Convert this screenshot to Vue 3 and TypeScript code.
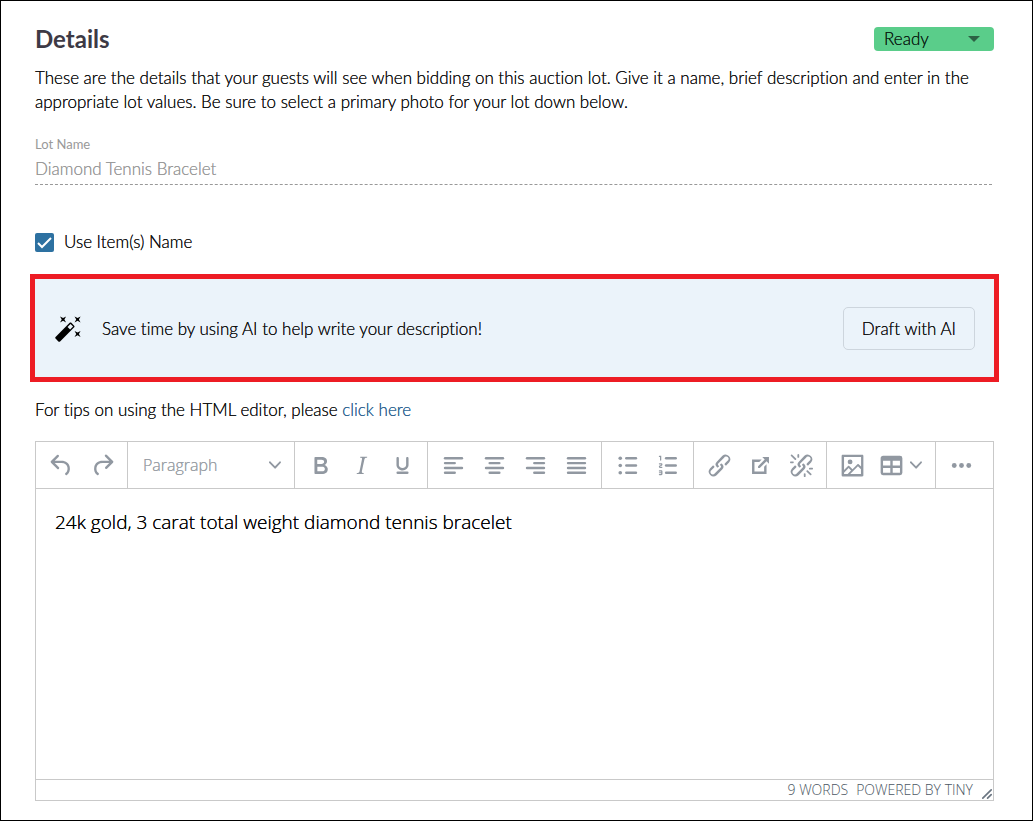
<script setup lang="ts">
import { ref } from 'vue'

interface Tool {
  name: string
  paths: string[]
  menu?: boolean
}

const bar = (x: number, y: number, w: number): string =>
  `M${x + 1} ${y}h${w - 2}a1 1 0 0 1 0 2h${2 - w}a1 1 0 0 1 0-2Z`
const dot = (x: number, y: number, r: number): string =>
  `M${x - r} ${y}a${r} ${r} 0 1 0 ${2 * r} 0a${r} ${r} 0 1 0 ${-2 * r} 0Z`

const chain =
  'M6.2 12.3a1 1 0 0 1 1.4 1.4l-2.1 2a2 2 0 1 0 2.7 2.8l4.8-4.8a1 1 0 0 0 0-1.4 1 1 0 1 1 1.4-1.3 2.9 2.9 0 0 1 0 4L9.6 20a3.9 3.9 0 0 1-5.5-5.5l2-2Zm11.6-.6a1 1 0 0 1-1.4-1.4l2-2a2 2 0 1 0-2.6-2.8L11 10.3a1 1 0 0 0 0 1.4A1 1 0 1 1 9.6 13a2.9 2.9 0 0 1 0-4L14.4 4a3.9 3.9 0 0 1 5.5 5.5l-2 2Z'
const chevron =
  'M8.7 2.2c.3-.3.8-.3 1 0 .4.4.4.9 0 1.2L5.7 7.8c-.3.3-.9.3-1.2 0L.2 3.4a.8.8 0 0 1 0-1.2c.3-.3.8-.3 1.1 0L5 6l3.7-3.8Z'

const history: Tool[] = [
  { name: 'Undo', paths: ['M6.4 8H12c3.7 0 6.2 2 6.8 5.1.6 2.7-.4 5.6-2.3 6.8a1 1 0 0 1-1-1.8c1.1-.6 1.8-2.7 1.4-4.6-.5-2.1-2.1-3.5-4.9-3.5H6.4l3.3 3.3a1 1 0 1 1-1.4 1.4l-5-5a1 1 0 0 1 0-1.4l5-5a1 1 0 0 1 1.4 1.4L6.4 8Z'] },
  { name: 'Redo', paths: ['M17.6 10H12c-2.8 0-4.4 1.4-4.9 3.5-.4 2 .3 4 1.4 4.6a1 1 0 1 1-1 1.8c-2-1.2-2.9-4.1-2.3-6.8.6-3 3-5.1 6.8-5.1h5.6l-3.3-3.3a1 1 0 1 1 1.4-1.4l5 5a1 1 0 0 1 0 1.4l-5 5a1 1 0 0 1-1.4-1.4l3.3-3.3Z'] },
]

const groups: Tool[][] = [
  [
    { name: 'Bold', paths: ['M7.8 19c-.3 0-.5 0-.6-.2l-.2-.5V5.7c0-.2 0-.4.2-.5l.6-.2h5c1.5 0 2.7.3 3.5 1 .7.6 1.1 1.4 1.1 2.5a3 3 0 0 1-.6 1.9c-.4.6-1 1-1.6 1.2.4.1.9.3 1.3.6s.8.7 1 1.2c.4.4.5 1 .5 1.6 0 1.3-.4 2.3-1.3 3-.8.7-2.1 1-3.8 1H7.8Zm5-8.3c.6 0 1.2-.1 1.6-.5.4-.3.6-.7.6-1.3 0-1.1-.8-1.7-2.3-1.7H9.3v3.5h3.4Zm.5 6c.7 0 1.3-.1 1.7-.4.4-.4.6-.9.6-1.5s-.2-1-.7-1.4c-.4-.3-1-.4-2-.4H9.4v3.8h4Z'] },
    { name: 'Italic', paths: ['m16.7 4.7-.1.9h-.3c-.6 0-1 0-1.4.3-.3.3-.4.6-.5 1.1l-2.1 9.8v.6c0 .5.4.8 1.4.8h.2l-.2.8H8l.2-.8h.2c1.1 0 1.8-.5 2-1.5l2-9.8.1-.5c0-.6-.4-.8-1.4-.8h-.3l.2-.9h5.8Z'] },
    { name: 'Underline', paths: ['M16 5c.6 0 1 .4 1 1v5.5a4 4 0 0 1-.4 1.8l-1 1.4a5.3 5.3 0 0 1-5.5 1 5 5 0 0 1-1.6-1c-.5-.4-.8-.9-1.1-1.4a4 4 0 0 1-.4-1.8V6c0-.6.4-1 1-1s1 .4 1 1v5.5c0 .3 0 .6.2 1l.6.7a3.3 3.3 0 0 0 2.2.8 3.4 3.4 0 0 0 2.2-.8c.3-.2.4-.5.6-.8l.2-.9V6c0-.6.4-1 1-1Z', bar(7, 17, 10)] },
  ],
  [
    { name: 'Align left', paths: [bar(4, 5, 16), bar(4, 9, 10), bar(4, 13, 16), bar(4, 17, 10)] },
    { name: 'Align center', paths: [bar(4, 5, 16), bar(7, 9, 10), bar(4, 13, 16), bar(7, 17, 10)] },
    { name: 'Align right', paths: [bar(4, 5, 16), bar(10, 9, 10), bar(4, 13, 16), bar(10, 17, 10)] },
    { name: 'Justify', paths: [bar(4, 5, 16), bar(4, 9, 16), bar(4, 13, 16), bar(4, 17, 16)] },
  ],
  [
    { name: 'Bullet list', paths: [bar(10, 5, 10), bar(10, 11, 10), bar(10, 17, 10), dot(6, 6, 1.5), dot(6, 12, 1.5), dot(6, 18, 1.5)] },
    { name: 'Numbered list', paths: [bar(9, 5, 10), bar(9, 11, 10), bar(9, 17, 10), 'M6 4v3.5c0 .3-.2.5-.5.5a.5.5 0 0 1-.5-.5V5h-.5a.5.5 0 0 1 0-1H6Zm-1 8.8.2.2h1.3c.3 0 .5.2.5.5s-.2.5-.5.5H4.9a1 1 0 0 1-.9-1V13c0-.4.3-.8.6-1l1.2-.4.2-.3a.2.2 0 0 0-.2-.2H4.5a.5.5 0 0 1-.5-.5c0-.3.2-.5.5-.5h1.6c.5 0 .9.4.9 1v.1c0 .4-.3.8-.6 1l-1.2.4-.2.3ZM7 17v2c0 .6-.4 1-1 1H4.5a.5.5 0 0 1 0-1h1.2c.2 0 .3-.1.3-.3 0-.2-.1-.3-.3-.3H4.4a.4.4 0 1 1 0-.8h1.3c.2 0 .3-.1.3-.3 0-.2-.1-.3-.3-.3H4.5a.5.5 0 1 1 0-1H6c.6 0 1 .4 1 1Z'] },
  ],
  [
    { name: 'Insert link', paths: [chain] },
    { name: 'Open link', paths: ['m15 13 2-2v8H5V7h8l-2 2H7v8h8v-4Zm4-8v5.5l-2-2-5.6 5.5H10v-1.4L15.5 7l-2-2H19Z'] },
    { name: 'Remove link', paths: [chain, 'M7.6 6.3a.8.8 0 0 1-1 1.1L3.3 4.2a.7.7 0 1 1 1-1l3.2 3.1ZM5.1 8.6a.8.8 0 0 1 0 1.5H3a.8.8 0 0 1 0-1.5H5Zm5-3.5a.8.8 0 0 1-1.5 0V3a.8.8 0 0 1 1.5 0V5Zm6 11.8a.8.8 0 0 1 1-1l3.2 3.2a.8.8 0 0 1-1 1L16 17Zm-2.2 2a.8.8 0 0 1 1.5 0V21a.8.8 0 0 1-1.5 0V19Zm5-3.5a.7.7 0 1 1 0-1.5H21a.8.8 0 0 1 0 1.5H19Z'] },
  ],
  [
    { name: 'Insert image', paths: ['m5 15.7 3.3-3.2c.3-.3.7-.3 1 0L12 15l4.1-4c.3-.4.8-.4 1 0l2 1.9V5H5v10.7ZM5 18V19h3l2.8-2.9-2-2L5 17.9Zm14-3-2.5-2.4-6.4 6.5H19v-4ZM4 3h16c.6 0 1 .4 1 1v16c0 .6-.4 1-1 1H4a1 1 0 0 1-1-1V4c0-.6.4-1 1-1Z', dot(10, 9, 2)] },
    { name: 'Table', menu: true, paths: ['M19 4a2 2 0 0 1 2 2v12a2 2 0 0 1-2 2H5a2 2 0 0 1-2-2V6c0-1.1.9-2 2-2h14ZM5 14v4h6v-4H5Zm14 0h-6v4h6v-4Zm0-6h-6v4h6V8ZM5 12h6V8H5v4Z'] },
  ],
  [{ name: 'More', paths: [dot(6, 12, 2), dot(12, 12, 2), dot(18, 12, 2)] }],
]

const status = ref('Ready')
const lotName = ref('Diamond Tennis Bracelet')
const useItemName = ref(true)
const block = ref('Paragraph')
const description = ref('24k gold, 3 carat total weight diamond tennis bracelet')
</script>

<template>
  <main class="page">
    <header class="head">
      <h1>Details</h1>
      <div class="status">
        <select v-model="status" aria-label="Lot status">
          <option>Ready</option>
          <option>Draft</option>
        </select>
        <svg viewBox="0 0 12 6" aria-hidden="true"><path d="M0 0h12L6 6Z" /></svg>
      </div>
    </header>
    <p class="intro">
      These are the details that your guests will see when bidding on this auction lot. Give it a
      name, brief description and enter in the appropriate lot values. Be sure to select a primary
      photo for your lot down below.
    </p>

    <div class="field">
      <label for="lot-name">Lot Name</label>
      <input id="lot-name" v-model="lotName" type="text" :disabled="useItemName" />
    </div>

    <label class="check">
      <input v-model="useItemName" type="checkbox" />
      <span class="box">
        <svg viewBox="0 0 19 19" aria-hidden="true"><path d="M3 10l4 4 9-9" /></svg>
      </span>
      Use Item(s) Name
    </label>

    <section class="assist">
      <svg class="wand" viewBox="0 0 24 24" aria-hidden="true">
        <path
          d="M7.5 5.6 5 7l1.4-2.5L5 2l2.5 1.4L10 2 8.6 4.5 10 7ZM19.5 15.4 22 14l-1.4 2.5L22 19l-2.5-1.4L17 19l1.4-2.5L17 14ZM22 2l-1.4 2.5L22 7l-2.5-1.4L17 7l1.4-2.5L17 2l2.5 1.4ZM13.34 12.78l2.44-2.44-2.12-2.12-2.44 2.44ZM14.37 7.29l2.34 2.34c.39.37.39 1.02 0 1.41L5.04 22.71c-.39.39-1.04.39-1.41 0l-2.34-2.34c-.39-.37-.39-1.02 0-1.41L12.96 7.29c.39-.39 1.04-.39 1.41 0Z"
        />
      </svg>
      <p>Save time by using AI to help write your description!</p>
      <button type="button">Draft with AI</button>
    </section>

    <p class="tips">For tips on using the HTML editor, please <a href="#">click here</a></p>

    <section class="editor">
      <div class="toolbar" role="toolbar" aria-label="Formatting">
        <div class="group">
          <button v-for="t in history" :key="t.name" type="button" :aria-label="t.name">
            <svg class="icon" viewBox="0 0 24 24"><path v-for="p in t.paths" :key="p" :d="p" /></svg>
          </button>
        </div>
        <div class="group">
          <div class="format">
            <select v-model="block" aria-label="Block format">
              <option>Paragraph</option>
              <option>Heading 1</option>
            </select>
            <svg class="chevron" viewBox="0 0 10 10" aria-hidden="true"><path :d="chevron" /></svg>
          </div>
        </div>
        <div v-for="(g, i) in groups" :key="i" class="group">
          <button
            v-for="t in g"
            :key="t.name"
            type="button"
            :class="{ menu: t.menu }"
            :aria-label="t.name"
          >
            <svg class="icon" viewBox="0 0 24 24"><path v-for="p in t.paths" :key="p" :d="p" /></svg>
            <svg v-if="t.menu" class="chevron" viewBox="0 0 10 10"><path :d="chevron" /></svg>
          </button>
        </div>
      </div>
      <textarea v-model="description" aria-label="Description"></textarea>
      <footer class="foot">
        <span>9 WORDS</span>
        <a href="#">POWERED BY TINY</a>
        <svg viewBox="0 0 10 10" aria-hidden="true">
          <path
            d="M8.1 1.1A.5.5 0 1 1 9 2l-7 7A.5.5 0 1 1 1 8l7-7ZM8.1 5.1A.5.5 0 1 1 9 6l-3 3A.5.5 0 1 1 5 8l3-3Z"
          />
        </svg>
      </footer>
    </section>
  </main>
</template>

<style>
body {
  margin: 0;
  background: #fff;
}
</style>

<style scoped>
.page {
  box-sizing: border-box;
  display: flex;
  flex-direction: column;
  min-height: 100vh;
  padding: 23px 38px 19px 34px;
  border: 1px solid #000;
  font: 300 17px/24px Lato, "Liberation Sans", sans-serif;
  font-variant-ligatures: none;
  color: #111;
}
h1,
p {
  margin: 0;
}
button,
input,
select,
textarea {
  margin: 0;
  font: inherit;
  color: inherit;
}
p,
.status select,
.check,
.field input,
.assist button,
.format select,
textarea {
  text-shadow: 0 0 0 currentColor;
}
.head {
  display: flex;
  align-items: center;
  justify-content: space-between;
  height: 30px;
}
h1 {
  font-size: 24px;
  line-height: 30px;
  font-weight: 700;
  color: #3d3a45;
}
.status {
  display: grid;
  align-items: center;
  width: 120px;
}
.status > * {
  grid-area: 1 / 1;
}
.status select {
  appearance: none;
  height: 24px;
  padding: 0 10px;
  border: 0;
  border-radius: 4px;
  background: #5acd8a;
  color: #0b1f14;
}
.status svg {
  justify-self: end;
  width: 12px;
  height: 6px;
  margin-right: 14px;
  fill: #2c6244;
  pointer-events: none;
}
.intro {
  margin-top: 12px;
}
.field {
  display: flex;
  flex-direction: column;
  margin: 22px 2px 0 0;
}
.field label {
  font-size: 13px;
  line-height: 16px;
  font-weight: 400;
  color: #999;
}
.field input {
  height: 32px;
  padding: 0;
  border: 0;
  border-bottom: 1px dashed #999;
  background: none;
  color: #999;
}
.check {
  display: flex;
  align-items: center;
  gap: 10px;
  align-self: flex-start;
  margin-top: 45px;
}
.check input {
  position: absolute;
  opacity: 0;
}
.box {
  display: flex;
  width: 19px;
  height: 19px;
  border-radius: 2px;
  background: #2d71a1;
}
.box path {
  fill: none;
  stroke: #fff;
  stroke-width: 2;
}
.assist {
  display: flex;
  align-items: center;
  margin: 20px -5px 0;
  padding: 28px 19px 27px;
  border: 5px solid #ed1c24;
  background: #ebf3fa;
}
.wand {
  width: 29px;
  height: 29px;
  margin-right: 19px;
}
.wand path {
  fill: #000;
  fill-rule: evenodd;
}
.assist p {
  flex: 1;
}
.assist button {
  height: 43px;
  padding: 0 18px;
  border: 1px solid #cdd5dd;
  border-radius: 5px;
  background: none;
}
.tips {
  margin-top: 16px;
}
.tips a {
  color: #2d6391;
  text-decoration: none;
}
.editor {
  flex: 1;
  display: flex;
  flex-direction: column;
  margin-top: 19px;
  border: 1px solid #c9c9c9;
  font-family: "Open Sans", "Noto Sans", sans-serif;
}
.toolbar {
  display: flex;
  height: 46px;
  border-bottom: 1px solid #c9c9c9;
}
.group {
  display: flex;
  padding: 0 4px 0 5px;
  border-right: 1px solid #c9c9c9;
}
.group:last-child {
  border-right: 0;
}
.group button {
  display: flex;
  align-items: center;
  justify-content: center;
  width: 41px;
  padding: 0;
  border: 0;
  background: none;
}
.group .menu {
  justify-content: flex-start;
  gap: 4px;
  width: 58px;
  padding-left: 4px;
}
.icon {
  width: 29px;
  height: 29px;
}
.icon path,
.chevron path {
  fill: #9198a1;
}
.icon path {
  fill-rule: evenodd;
}
.chevron {
  width: 12px;
  height: 12px;
}
.format {
  display: grid;
  align-items: center;
  width: 157px;
}
.format > * {
  grid-area: 1 / 1;
}
.format select {
  appearance: none;
  height: 41px;
  padding: 0 10px;
  border: 0;
  background: none;
  font-size: 16px;
  color: #9a9fa6;
}
.format .chevron {
  justify-self: end;
  margin-right: 9px;
  pointer-events: none;
}
textarea {
  flex: 1;
  min-height: 200px;
  padding: 20px 19px;
  border: 0;
  resize: none;
  outline: 0;
  font-size: 19px;
  line-height: 26px;
  color: #000;
}
.foot {
  display: flex;
  align-items: center;
  justify-content: flex-end;
  gap: 8px;
  height: 20px;
  border-top: 1px solid #c9c9c9;
  font-size: 14px;
  line-height: 22px;
  color: #4c5763;
}
.foot a {
  color: inherit;
  text-decoration: none;
}
.foot svg {
  align-self: flex-end;
  width: 12px;
  height: 12px;
  fill: #6b7682;
}
</style>
